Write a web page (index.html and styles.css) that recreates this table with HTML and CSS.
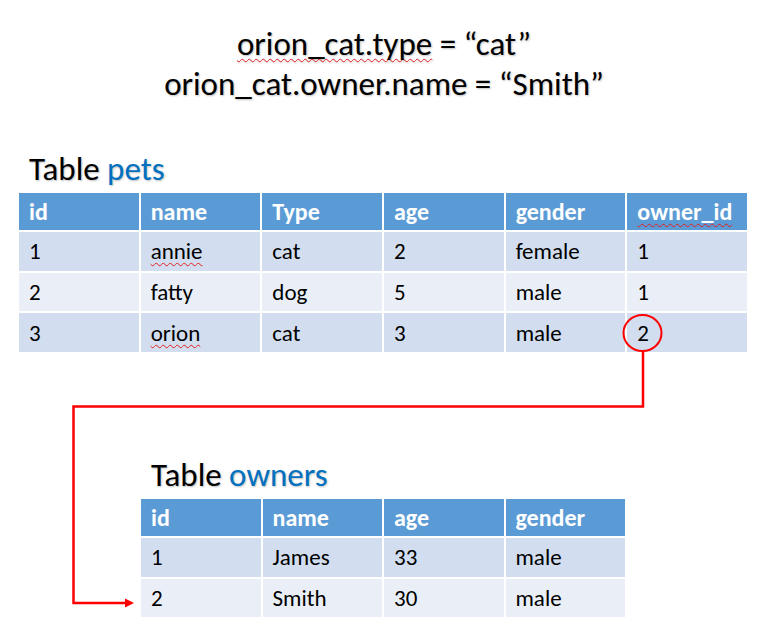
FILE: index.html
```html
<!DOCTYPE html>
<html>
<head>
<meta charset="utf-8">
<link rel="stylesheet" href="styles.css">
</head>
<body>
<div class="page">
  <div class="code">
    <div class="line"><span class="sp">orion_cat.type</span> = “cat”</div>
    <div class="line">orion_cat.owner.name = “Smith”</div>
  </div>

  <section class="block pets">
    <h2 class="title">Table <span class="accent">pets</span></h2>
    <div class="grid six">
      <div class="th">id</div><div class="th">name</div><div class="th">Type</div><div class="th">age</div><div class="th">gender</div><div class="th"><span class="sp">owner_id</span></div>
      <div class="td odd">1</div><div class="td odd"><span class="sp">annie</span></div><div class="td odd">cat</div><div class="td odd">2</div><div class="td odd">female</div><div class="td odd">1</div>
      <div class="td even">2</div><div class="td even">fatty</div><div class="td even">dog</div><div class="td even">5</div><div class="td even">male</div><div class="td even">1</div>
      <div class="td odd">3</div><div class="td odd"><span class="sp">orion</span></div><div class="td odd">cat</div><div class="td odd">3</div><div class="td odd">male</div><div class="td odd">2</div>
    </div>
  </section>

  <section class="block owners">
    <h2 class="title">Table <span class="accent">owners</span></h2>
    <div class="grid four">
      <div class="th">id</div><div class="th">name</div><div class="th">age</div><div class="th">gender</div>
      <div class="td odd">1</div><div class="td odd">James</div><div class="td odd">33</div><div class="td odd">male</div>
      <div class="td even">2</div><div class="td even">Smith</div><div class="td even">30</div><div class="td even">male</div>
    </div>
  </section>

  <svg class="connector" width="768" height="643" viewBox="0 0 768 643">
    <ellipse cx="642.5" cy="333" rx="19" ry="18" fill="none" stroke="#ff0000" stroke-width="2"/>
    <polyline points="643,352 643,406.5 73.5,406.5 73.5,603 127,603" fill="none" stroke="#ff0000" stroke-width="2.5"/>
    <polygon points="125,598.5 134,603 125,607.5" fill="#ff0000"/>
  </svg>
</div>
</body>
</html>
```

FILE: styles.css
```css
html, body {
  margin: 0;
  padding: 0;
  background: #ffffff;
}

.page {
  position: relative;
  width: 768px;
  height: 643px;
  overflow: hidden;
  font-family: "Carlito", "Lato", "Open Sans", sans-serif;
  color: #000;
}

.code {
  padding-top: 24px;
  text-align: center;
  font-size: 33px;
  line-height: 40px;
  text-shadow: 1px 1px 2px rgba(0, 0, 0, 0.25);
}

.sp {
  text-decoration: underline wavy #e02020;
  text-decoration-thickness: 1px;
  text-underline-offset: 3px;
  text-decoration-skip-ink: none;
}

.block {
  display: flex;
  flex-direction: column;
}

.pets {
  margin: 46px 0 0 19px;
  width: 728px;
}

.owners {
  margin: 104px 0 0 141px;
  width: 484px;
}

.title {
  margin: 0 0 0 10px;
  font-size: 33px;
  font-weight: normal;
  line-height: 38px;
  height: 38px;
  text-shadow: 1px 1px 2px rgba(0, 0, 0, 0.25);
}

.accent {
  color: #0070c0;
}

.grid {
  display: grid;
  column-gap: 2px;
  row-gap: 2px;
  grid-auto-rows: 38.7px;
  margin-top: 5px;
}

.grid.six {
  grid-template-columns: repeat(6, 1fr);
  grid-template-rows: 37px;
}

.grid.four {
  grid-template-columns: repeat(4, 1fr);
  grid-template-rows: 37px;
}

.th, .td {
  display: flex;
  align-items: center;
  padding-left: 10px;
  font-size: 23px;
}

.th {
  background: #5b9bd5;
  color: #ffffff;
  font-weight: bold;
  font-size: 24px;
}

.td.odd {
  background: #d2deef;
}

.td.even {
  background: #eaeff7;
}

.connector {
  position: absolute;
  left: 0;
  top: 0;
  pointer-events: none;
}
```
